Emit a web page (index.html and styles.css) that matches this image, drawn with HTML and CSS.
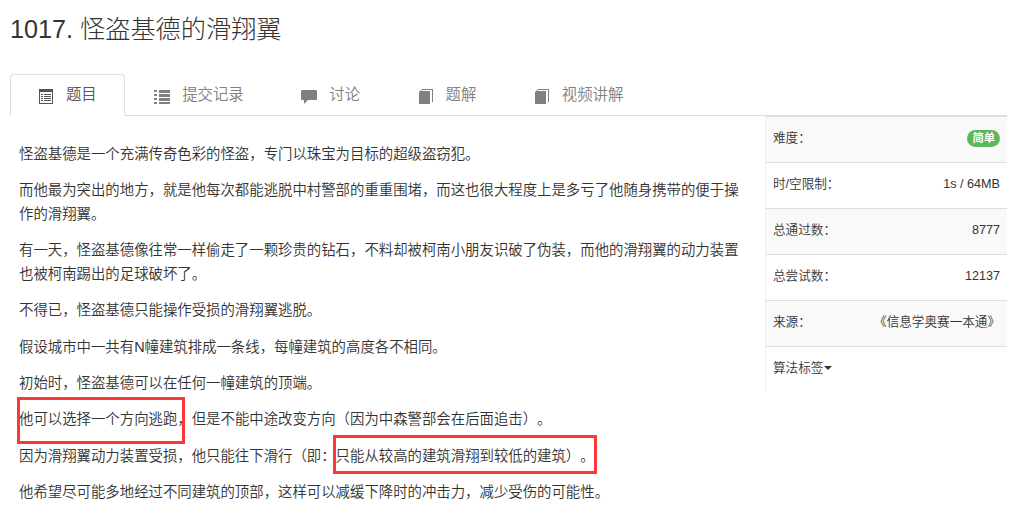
FILE: index.html
```
<!DOCTYPE html>
<html lang="zh-CN">
<head>
  <meta charset="UTF-8">
  <meta name="viewport" content="width=device-width, initial-scale=1.0">
  <title>1017. 怪盗基德的滑翔翼</title>
  <link rel="stylesheet" href="styles.css">
</head>
<body>
  <div class="container">
    <h1 class="problem-title">1017. 怪盗基德的滑翔翼</h1>

    <ul class="nav-tabs">
      <li class="active">
        <a href="#">
          <svg class="icon" viewBox="0 0 16 16" fill="currentColor"><path fill-rule="evenodd" d="M1 0H15V15H1ZM2 3V14H14V3ZM3 5H5V6H3ZM6 5H13V6H6ZM3 7H5V8H3ZM6 7H13V8H6ZM3 9H5V10H3ZM6 9H13V10H6ZM3 11H5V12H3ZM6 11H13V12H6Z"/></svg>
          题目
        </a>
      </li>
      <li>
        <a href="#">
          <svg class="icon" viewBox="0 0 16 16" fill="currentColor"><path d="M0 1H3V3H0ZM5 1H16V4H5ZM0 5H3V7H0ZM5 5H16V8H5ZM0 9H3V11H0ZM5 9H16V12H5ZM0 13H3V15H0ZM5 13H16V15H5Z"/></svg>
          提交记录
        </a>
      </li>
      <li>
        <a href="#">
          <svg class="icon" viewBox="0 0 16 16" fill="currentColor"><path d="M1 1H15Q16 1 16 2V10Q16 11 15 11H7L3 15V11H1Q0 11 0 10V2Q0 1 1 1Z"/></svg>
          讨论
        </a>
      </li>
      <li>
        <a href="#">
          <svg class="icon" viewBox="0 0 16 16" fill="currentColor"><path d="M1 3L4 0H15V13H14V1H4L3 2H12V15H1Z"/></svg>
          题解
        </a>
      </li>
      <li>
        <a href="#">
          <svg class="icon" viewBox="0 0 16 16" fill="currentColor"><path d="M1 3L4 0H15V13H14V1H4L3 2H12V15H1Z"/></svg>
          视频讲解
        </a>
      </li>
    </ul>

    <div class="row">
      <div class="content">
        <p>怪盗基德是一个充满传奇色彩的怪盗，专门以珠宝为目标的超级盗窃犯。</p>
        <p>而他最为突出的地方，就是他每次都能逃脱中村警部的重重围堵，而这也很大程度上是多亏了他随身携带的便于操作的滑翔翼。</p>
        <p>有一天，怪盗基德像往常一样偷走了一颗珍贵的钻石，不料却被柯南小朋友识破了伪装，而他的滑翔翼的动力装置也被柯南踢出的足球破坏了。</p>
        <p>不得已，怪盗基德只能操作受损的滑翔翼逃脱。</p>
        <p>假设城市中一共有N幢建筑排成一条线，每幢建筑的高度各不相同。</p>
        <p>初始时，怪盗基德可以在任何一幢建筑的顶端。</p>
        <p><span class="mark mark-direction">他可以选择一个方向逃跑，</span>但是不能中途改变方向（因为中森警部会在后面追击）。</p>
        <p>因为滑翔翼动力装置受损，他只能往下滑行（即：<span class="mark mark-height">只能从较高的建筑滑翔到较低的建筑）。</span></p>
        <p>他希望尽可能多地经过不同建筑的顶部，这样可以减缓下降时的冲击力，减少受伤的可能性。</p>
      </div>

      <table class="info">
        <tbody>
          <tr><td>难度：</td><td class="value"><span class="badge">简单</span></td></tr>
          <tr><td>时/空限制：</td><td class="value">1s / 64MB</td></tr>
          <tr><td>总通过数：</td><td class="value">8777</td></tr>
          <tr><td>总尝试数：</td><td class="value">12137</td></tr>
          <tr><td>来源：</td><td class="value">《信息学奥赛一本通》</td></tr>
          <tr><td colspan="2">算法标签<span class="caret"></span></td></tr>
        </tbody>
      </table>
    </div>
  </div>
</body>
</html>
```
FILE: styles.css
```
body {
  margin: 0;
  overflow: hidden;
  background-color: #fff;
  color: #333;
  font-family: "Liberation Sans", "Noto Sans CJK SC", sans-serif;
  text-spacing-trim: space-all;
}
.container {
  width: 997px;
  padding: 11px 0 0 10px;
}
.problem-title {
  margin: 0;
  height: 63px;
  font-size: 25.2px;
  font-weight: 300;
  line-height: 37px;
}

/* tabs */
.nav-tabs {
  display: flex;
  height: 41px;
  margin: 0;
  padding: 0;
  list-style: none;
  border-bottom: 1px solid #ddd;
}
.nav-tabs li {
  margin-right: 1.6px;
}
.nav-tabs a {
  display: flex;
  align-items: center;
  gap: 11.9px;
  box-sizing: border-box;
  height: 42px;
  padding: 0 27px;
  border: 1px solid transparent;
  border-radius: 4px 4px 0 0;
  color: #808080;
  font-size: 15.4px;
  font-weight: 350;
  line-height: 40px;
  text-decoration: none;
}
.nav-tabs .active a {
  background-color: #fff;
  border-color: #ddd;
  border-bottom-color: #fff;
  color: #555;
}
.icon {
  width: 16px;
  height: 16px;
  margin-top: 4px;
}

/* problem text */
.row {
  display: flex;
  align-items: flex-start;
}
.content {
  box-sizing: border-box;
  width: 755px;
  padding: 26.6px 24px 0 9px;
  font-size: 14.4px;
  font-weight: 350;
  line-height: 23.76px;
}
.content p {
  margin: 0 0 12.6px;
}
.mark {
  position: relative;
}
.mark::before {
  content: "";
  position: absolute;
  box-sizing: border-box;
  border: 3px solid #fa3838;
}
.mark-direction::before {
  top: -14.4px;
  left: -2px;
  width: 168px;
  height: 47px;
}
.mark-height::before {
  top: -12.6px;
  left: -3px;
  width: 264px;
  height: 39px;
}

/* problem info */
.info {
  width: 242px;
  border-collapse: separate;
  border-spacing: 0;
  border-left: 1px solid #eee;
  font-size: 12.6px;
  font-weight: 350;
}
.info td {
  box-sizing: border-box;
  height: 46px;
  padding: 0 7px 4px;
  border-top: 1px solid #ddd;
  line-height: 18px;
}
.info tr:nth-child(odd) {
  background-color: #f9f9f9;
}
.info .value {
  text-align: right;
}
.badge {
  display: inline-block;
  padding: 0 5px;
  border-radius: 9px;
  background-color: #5cb85c;
  color: #fff;
  font-size: 11.3px;
  font-weight: bold;
  line-height: 17px;
}
.caret {
  display: inline-block;
  margin-left: 1px;
  vertical-align: middle;
  border-top: 4px solid #333;
  border-right: 4px solid transparent;
  border-left: 4px solid transparent;
}
```
